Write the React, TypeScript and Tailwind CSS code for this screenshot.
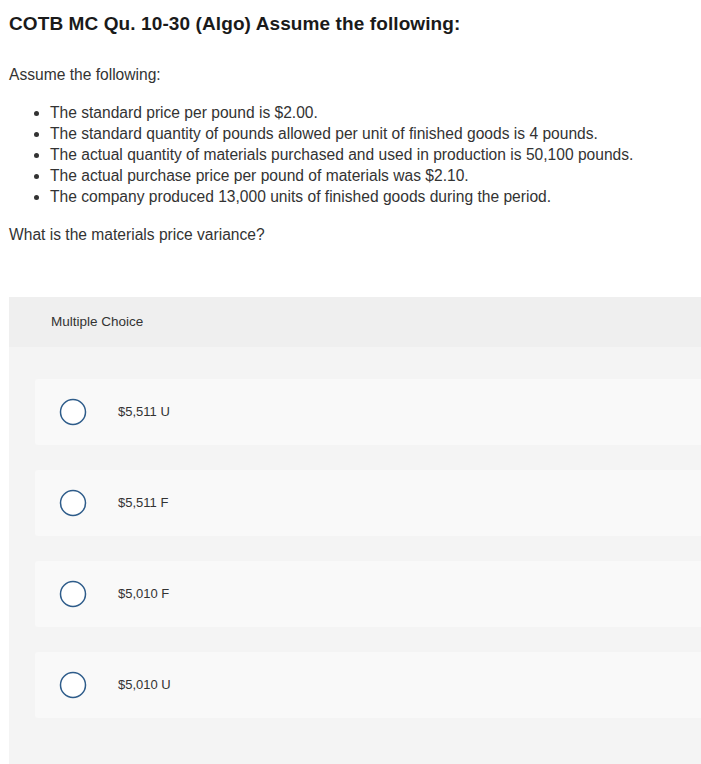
import React from "react";

const options = ["$5,511 U", "$5,511 F", "$5,010 F", "$5,010 U"];

function Radio() {
  return (
    <svg width="28" height="28" viewBox="0 0 28 28" className="shrink-0">
      <circle cx="14" cy="14" r="12.5" fill="#ffffff" stroke="#2e5c8a" strokeWidth="1.5" />
    </svg>
  );
}

export default function App() {
  return (
    <div className="bg-white w-[701px] h-[764px] overflow-hidden text-[#333333]" style={{ fontFamily: '"Liberation Sans", Arial, sans-serif' }}>
      <div className="pl-[9px] pt-[13px]">
        <h1 className="text-[19px] leading-[22px] font-bold text-[#1a1a1a] tracking-[0.1px]">COTB MC Qu. 10-30 (Algo) Assume the following:</h1>
        <p className="mt-[30px] text-[15.6px] leading-[20px]">Assume the following:</p>
        <ul className="mt-[17px] ml-[26px] list-disc pl-[15px] text-[15.6px] leading-[21px]">
          <li>The standard price per pound is $2.00.</li>
          <li>The standard quantity of pounds allowed per unit of finished goods is 4 pounds.</li>
          <li>The actual quantity of materials purchased and used in production is 50,100 pounds.</li>
          <li>The actual purchase price per pound of materials was $2.10.</li>
          <li>The company produced 13,000 units of finished goods during the period.</li>
        </ul>
        <p className="mt-[18px] text-[15.6px] leading-[20px]">What is the materials price variance?</p>
      </div>
      <div className="ml-[9px] mt-[52px] bg-[#f4f4f4] h-[500px]">
        <div className="h-[50px] bg-[#efefef] flex items-center pl-[42px] text-[13.5px] text-[#333333]">Multiple Choice</div>
        <div className="pt-[32px] pl-[26px] flex flex-col gap-[25px]">
          {options.map((o) => (
            <div key={o} className="h-[66px] bg-[#f9f9f9] rounded-l-[3px] flex items-center pl-[24px]">
              <Radio />
              <span className="ml-[31px] text-[13px] text-[#333333]">{o}</span>
            </div>
          ))}
        </div>
      </div>
    </div>
  );
}
